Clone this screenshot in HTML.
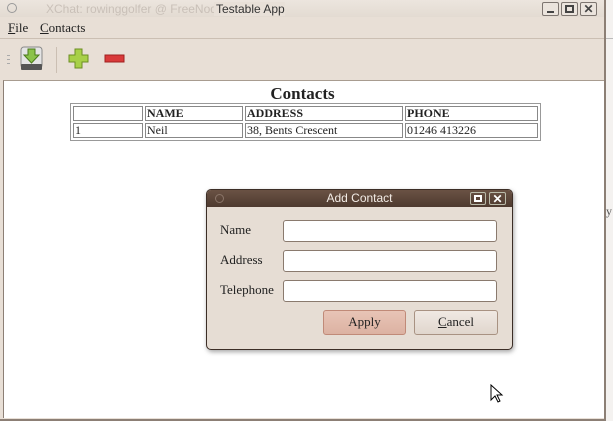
<!DOCTYPE html>
<html><head><style>
*{margin:0;padding:0;box-sizing:border-box}
body{width:613px;height:421px;background:#f4f2f0;position:relative;overflow:hidden;font-family:"Liberation Serif","DejaVu Serif",serif;font-size:12px;color:#222}
.abs{position:absolute}
#win{left:0;top:0;width:606px;height:421px;background:#e8dfd6;border-right:2px solid #8c7f75;border-bottom:2px solid #8c7f75}
#title{left:0;top:0;width:604px;height:17px;background:linear-gradient(#ece5de,#e3dbd2);font-family:"Liberation Sans",sans-serif;font-size:12px}
.wb{top:2px;width:17px;height:14px;border:1px solid #7d7570;border-radius:2px;background:#ebe4dd}
#content{left:3px;top:80px;width:601px;height:338px;background:#fff;border-top:1px solid #a89c90;border-left:1px solid #8c7f75}
table{border-collapse:separate;border:1px solid #999;border-spacing:2px;font-size:12px}
td{border:1px solid #888;height:15px;padding:0 1px;line-height:13px}
input{border:1px solid #8a7a6e;border-radius:3px;background:#fff}
.btn{border:1px solid #a89282;border-radius:3px;text-align:center;line-height:22px;font-size:13px}
.lbl{font-size:13px}
</style></head><body>
<div class="abs" style="left:606px;top:38px;width:7px;height:1px;background:#bbb"></div>
<div class="abs" id="win"></div>
<div class="abs" id="title">
  <div class="abs" style="left:7px;top:3px;width:10px;height:10px;border:1px solid #999;border-radius:50%"></div>
  <div class="abs" style="left:46px;top:2px;color:#c9c0b8">XChat: rowinggolfer @ FreeNode / #pyqt (+</div>
  <div class="abs" style="left:214px;top:2px;color:#333;background:#e8e0d8;padding-left:2px">Testable App</div>
  <div class="abs wb" style="left:542px"><div class="abs" style="left:4px;top:8px;width:7px;height:2px;background:#444"></div></div>
  <div class="abs wb" style="left:561px"><div class="abs" style="left:3px;top:2px;width:9px;height:8px;border:2px solid #444"></div></div>
  <div class="abs wb" style="left:580px;font:bold 12px 'Liberation Sans';text-align:center;line-height:12px;color:#444">✕</div>
</div>
<div class="abs lbl" style="left:8px;top:20px"><u>F</u>ile</div>
<div class="abs lbl" style="left:40px;top:20px"><u>C</u>ontacts</div>
<div class="abs" style="left:0;top:38px;width:604px;height:1px;background:#cbbfb3"></div>
<div class="abs" style="left:7px;top:55px;width:3px;height:9px;border-top:1px solid #aaa;border-bottom:1px solid #aaa"><div style="margin-top:3px;height:1px;background:#aaa"></div></div>
<svg class="abs" style="left:19px;top:46px" width="26" height="26"><rect x="2" y="1" width="21" height="21" rx="3" fill="#e4e4e4" stroke="#888"/><rect x="2" y="18" width="21" height="6" rx="1" fill="#555"/><path d="M9 3h7v6h4l-7.5 8l-7.5-8h4z" fill="#8bc34a" stroke="#4a7a1a"/></svg>
<div class="abs" style="left:56px;top:47px;width:1px;height:26px;background:#cbbfb3"></div>
<svg class="abs" style="left:68px;top:48px" width="22" height="22"><path d="M7 1h7v6h6v7h-6v6h-7v-6h-6v-7h6z" fill="#a8d048" stroke="#6b8e23"/></svg>
<svg class="abs" style="left:104px;top:54px" width="22" height="10"><rect x="1" y="1" width="19" height="7" fill="#d93a3a" stroke="#a02020"/></svg>
<div class="abs" id="content">
  <div class="abs" style="left:0;top:3px;width:597px;text-align:center;font-weight:bold;font-size:17px">Contacts</div>
  <table class="abs" style="left:66px;top:22px;width:471px">
    <tr style="font-weight:bold"><td style="width:70px"></td><td style="width:98px">NAME</td><td style="width:158px">ADDRESS</td><td>PHONE</td></tr>
    <tr><td>1</td><td>Neil</td><td>38, Bents Crescent</td><td>01246 413226</td></tr>
  </table>
</div>
<div class="abs" style="left:606px;top:204px;font-size:12px;color:#555">y</div>
<div class="abs" style="left:206px;top:189px;width:307px;height:161px;background:#e6ddd4;border:1px solid #3c2e26;border-radius:5px;box-shadow:1px 2px 5px rgba(0,0,0,.35);overflow:hidden">
  <div class="abs" style="left:0;top:0;width:305px;height:17px;background:linear-gradient(#6a5244,#4e3a2f);font:12px 'Liberation Sans',sans-serif;color:#f3ece6;text-align:center;line-height:16px">Add Contact
    <div class="abs" style="left:8px;top:4px;width:9px;height:9px;border:1px solid #8a7568;border-radius:50%"></div>
    <div class="abs" style="left:263px;top:2px;width:16px;height:13px;border:1px solid #bba;border-radius:2px"><div class="abs" style="left:3px;top:2px;width:8px;height:7px;border:2px solid #fff"></div></div>
    <div class="abs" style="left:282px;top:2px;width:17px;height:13px;border:1px solid #bba;border-radius:2px;font-weight:bold;line-height:12px;color:#fff">✕</div>
  </div>
  <div class="abs lbl" style="left:13px;top:32px">Name</div>
  <div class="abs lbl" style="left:13px;top:62px">Address</div>
  <div class="abs lbl" style="left:13px;top:92px">Telephone</div>
  <input class="abs" style="left:76px;top:30px;width:214px;height:22px">
  <input class="abs" style="left:76px;top:60px;width:214px;height:22px">
  <input class="abs" style="left:76px;top:90px;width:214px;height:22px">
  <div class="abs btn" style="left:116px;top:120px;width:83px;height:25px;background:linear-gradient(#e8c4b6,#dcb2a2);border-color:#c08a78">Apply</div>
  <div class="abs btn" style="left:207px;top:120px;width:84px;height:25px;background:linear-gradient(#f0e9e3,#e0d6cd)"><u>C</u>ancel</div>
</div>
<svg class="abs" style="left:490px;top:384px" width="14" height="20"><path d="M1 1v15l4-4 3 6 2-1-3-6h5z" fill="#fff" stroke="#000"/></svg>
</body></html>
